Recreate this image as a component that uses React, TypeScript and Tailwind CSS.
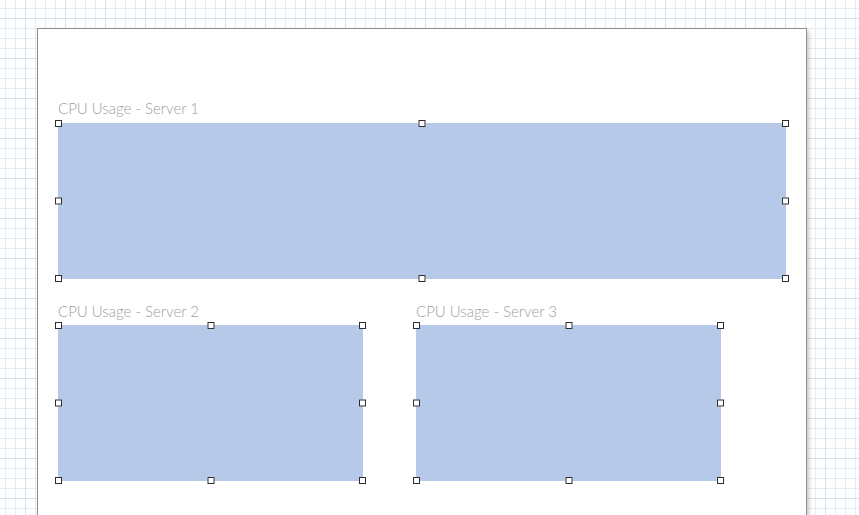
import React from "react";

function Handles() {
  const h = "absolute w-[7px] h-[7px] bg-white border border-[#2e2e2e]";
  return (
    <>
      <div className={`${h} left-[-3px] top-[-3px]`} />
      <div className={`${h} left-1/2 -translate-x-1/2 top-[-3px]`} />
      <div className={`${h} right-[-3px] top-[-3px]`} />
      <div className={`${h} left-[-3px] top-1/2 -translate-y-1/2`} />
      <div className={`${h} right-[-3px] top-1/2 -translate-y-1/2`} />
      <div className={`${h} left-[-3px] bottom-[-3px]`} />
      <div className={`${h} left-1/2 -translate-x-1/2 bottom-[-3px]`} />
      <div className={`${h} right-[-3px] bottom-[-3px]`} />
    </>
  );
}

function Chart({ label, width, gap }: { label: string; width: string; gap: string }) {
  return (
    <div className="flex flex-col">
      <div
        className={`h-[18px] leading-[18px] text-[15px] font-light text-[#a0a0a0] whitespace-nowrap ${gap}`}
        style={{ fontFamily: "Lato, 'Open Sans', sans-serif" }}
      >
        {label}
      </div>
      <div className={`relative h-[156px] bg-[#b7c9e8] ${width}`}>
        <Handles />
      </div>
    </div>
  );
}

export default function App() {
  return (
    <div className="w-[859px] h-[515px] overflow-hidden bg-white bg-[image:linear-gradient(to_right,#d3e1ee_1px,transparent_1px),linear-gradient(to_bottom,#d3e1ee_1px,transparent_1px),linear-gradient(to_right,#e3edf6_1px,transparent_1px),linear-gradient(to_bottom,#e3edf6_1px,transparent_1px)] bg-[size:40px_40px,40px_40px,10px_10px,10px_10px] bg-[position:25px_18px,25px_18px,5px_8px,5px_8px] pl-[37px] pt-[28px]">
      <div className="w-[770px] h-[600px] bg-white border border-[#8e8e8e] shadow-[2px_3px_4px_rgba(0,0,0,0.22)] pl-[20px] pt-[70px]">
        <Chart label="CPU Usage - Server 1" width="w-[728px]" gap="mb-[6px]" />
        <div className="flex gap-[53px] mt-[23px]">
          <Chart label="CPU Usage - Server 2" width="w-[305px]" gap="mb-[5px]" />
          <Chart label="CPU Usage - Server 3" width="w-[305px]" gap="mb-[5px]" />
        </div>
      </div>
    </div>
  );
}
